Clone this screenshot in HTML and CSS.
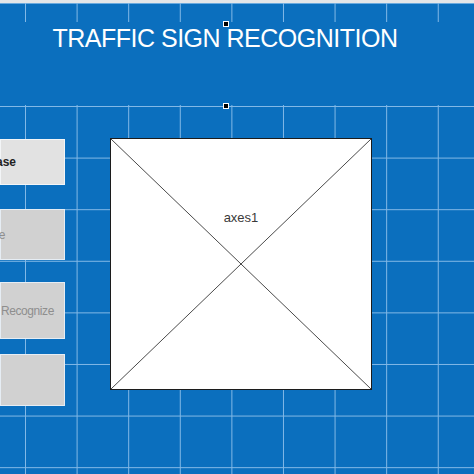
FILE: index.html
```html
<!DOCTYPE html>
<html>
<head>
<meta charset="utf-8">
<link rel="stylesheet" href="styles.css">
</head>
<body>
<div class="topstrip"></div>
<div class="titleband">TRAFFIC SIGN RECOGNITION</div>
<div class="workspace">
  <div class="controls">
    <div class="btn btn-load"><span>Load Database</span></div>
    <div class="btn btn-browse"><span>Browse Image</span></div>
    <div class="btn btn-recog"><span>Recognize</span></div>
    <div class="btn btn-last"></div>
  </div>
  <div class="axes">
    <svg class="axes-x" viewBox="0 0 100 100" preserveAspectRatio="none">
      <line x1="0" y1="0" x2="100" y2="100" vector-effect="non-scaling-stroke"/>
      <line x1="100" y1="0" x2="0" y2="100" vector-effect="non-scaling-stroke"/>
    </svg>
    <div class="axes-label">axes1</div>
  </div>
</div>
<div class="handle handle-top"></div>
<div class="handle handle-bottom"></div>
</body>
</html>
```
FILE: styles.css
```css
html, body {
  margin: 0;
  padding: 0;
}
body {
  width: 474px;
  height: 474px;
  overflow: hidden;
  position: relative;
  background-color: #0b6fbe;
  background-image:
    linear-gradient(to right, #82b8e6 1px, transparent 1px),
    linear-gradient(to bottom, #82b8e6 1px, transparent 1px);
  background-size: 51.6px 51.6px;
  background-position: 25px 106px;
  font-family: "Liberation Sans", Arial, sans-serif;
}
.topstrip {
  height: 3px;
  background: #e4e6e8;
}
.titleband {
  margin-top: 19px;
  height: 83px;
  box-sizing: border-box;
  background: #0b6fbe;
  color: #ffffff;
  font-size: 25px;
  letter-spacing: -0.5px;
  line-height: 30px;
  padding-top: 1px;
  padding-right: 24px;
  text-align: center;
  white-space: nowrap;
}
.workspace {
  display: flex;
  align-items: flex-start;
}
.controls {
  width: 65px;
  display: flex;
  flex-direction: column;
  padding-top: 34px;
}
.btn {
  display: flex;
  justify-content: flex-end;
  align-items: center;
  box-sizing: border-box;
  border: 1px solid #e6edf4;
  background: #d1d1d1;
  white-space: nowrap;
  color: #8e8e8e;
  font-size: 12px;
  letter-spacing: -0.4px;
}
.btn span {
  flex-shrink: 0;
}
.btn-load {
  height: 46px;
  background: #e2e2e2;
  border-color: #f3f5f7;
  color: #222222;
  font-weight: bold;
  letter-spacing: 0;
  padding-right: 48px;
}
.btn-browse {
  margin-top: 24px;
  height: 51px;
  padding-right: 59px;
}
.btn-recog {
  margin-top: 22px;
  height: 57px;
  padding-right: 10px;
}
.btn-last {
  margin-top: 15px;
  height: 52px;
}
.axes {
  position: relative;
  margin-left: 45px;
  margin-top: 33px;
  width: 262px;
  height: 252px;
  box-sizing: border-box;
  border: 1.5px solid #1c1c1c;
  background: #ffffff;
}
.axes-x {
  position: absolute;
  left: 0;
  top: 0;
  width: 100%;
  height: 100%;
}
.axes-x line {
  stroke: #4a4a4a;
  stroke-width: 1;
}
.axes-label {
  position: relative;
  padding-top: 71px;
  text-align: center;
  font-size: 13px;
  line-height: 15px;
  color: #3a3a3a;
}
.handle {
  position: absolute;
  left: 223px;
  width: 6px;
  height: 6px;
  box-sizing: border-box;
  background: #000000;
  border: 1px solid #ffffff;
}
.handle-top {
  top: 21px;
}
.handle-bottom {
  top: 103px;
}
```
